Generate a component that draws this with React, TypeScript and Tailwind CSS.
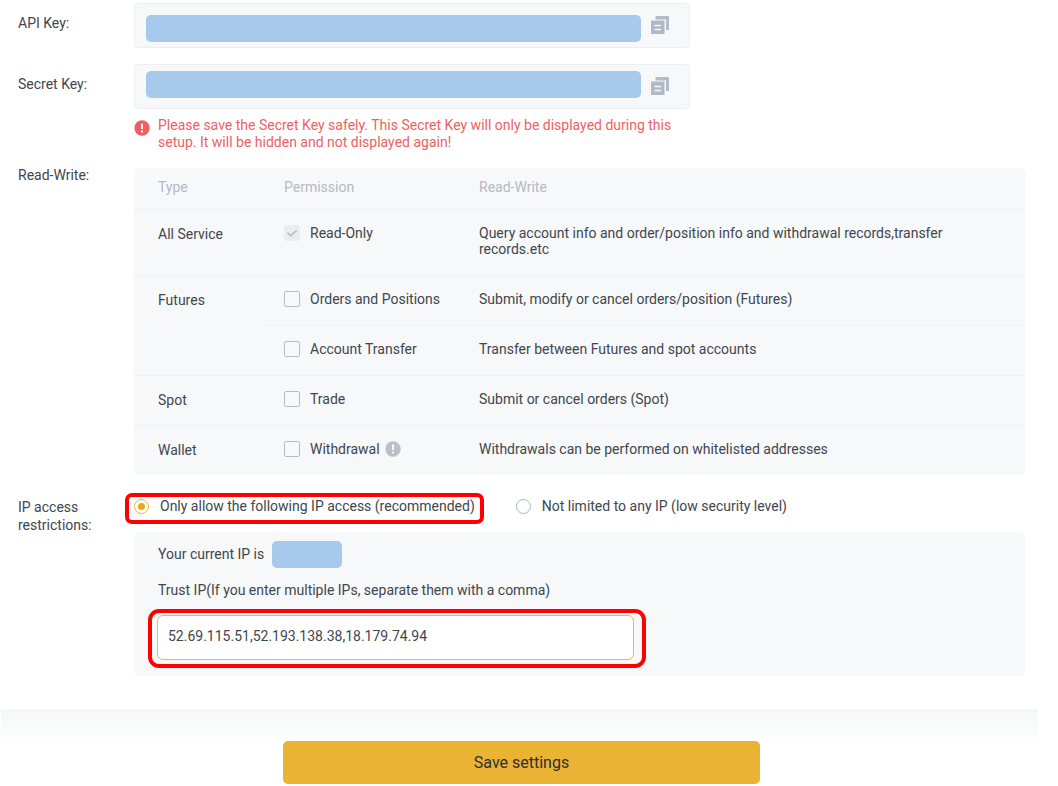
import { useState, type ReactNode } from 'react';
import clsx from 'clsx';

interface Permission {
  id: string;
  type?: string;
  typeRows?: number;
  label: string;
  description: string;
  locked?: boolean;
  hint?: boolean;
}

const permissions: Permission[] = [
  {
    id: 'read-only',
    type: 'All Service',
    label: 'Read-Only',
    description: 'Query account info and order/position info and withdrawal records,transfer records.etc',
    locked: true,
  },
  {
    id: 'futures-orders',
    type: 'Futures',
    typeRows: 2,
    label: 'Orders and Positions',
    description: 'Submit, modify or cancel orders/position (Futures)',
  },
  {
    id: 'futures-transfer',
    label: 'Account Transfer',
    description: 'Transfer between Futures and spot accounts',
  },
  { id: 'spot-trade', type: 'Spot', label: 'Trade', description: 'Submit or cancel orders (Spot)' },
  {
    id: 'wallet-withdrawal',
    type: 'Wallet',
    label: 'Withdrawal',
    description: 'Withdrawals can be performed on whitelisted addresses',
    hint: true,
  },
];

function CopyIcon() {
  return (
    <svg viewBox="0 0 18 18" className="h-[18px] w-[18px]" fill="none" aria-hidden="true">
      <path d="M5 0h12.5a.5.5 0 0 1 .5.5V14h-3V3.5H4.5v-3A.5.5 0 0 1 5 0z" fill="#b4bcc8" />
      <rect x="0" y="4.5" width="13.5" height="13.5" rx="0.6" fill="#b0b9c5" />
      <path d="M3.5 9.5h6.5M3.5 13.5h6.5" stroke="#f7f8fa" strokeWidth="1.3" />
    </svg>
  );
}

function AlertIcon({ className }: { className?: string }) {
  return (
    <svg viewBox="0 0 16 16" className={clsx('h-4 w-4 shrink-0', className)} aria-hidden="true">
      <circle cx="8" cy="8" r="7.7" fill="currentColor" />
      <path d="M8 3.5v5.6M8 10.6v1.9" stroke="#fff" strokeWidth="1.8" />
    </svg>
  );
}

function Row({ label, htmlFor, className, children }: {
  label: string;
  htmlFor?: string;
  className?: string;
  children: ReactNode;
}) {
  return (
    <div className="flex">
      <div className={clsx('w-[116px] shrink-0 pr-4 leading-[18px]', className)}>
        {htmlFor ? <label htmlFor={htmlFor}>{label}</label> : label}
      </div>
      <div className="min-w-0 flex-1">{children}</div>
    </div>
  );
}

function KeyField({ id, label, maskClass }: { id: string; label: string; maskClass: string }) {
  return (
    <div className="flex h-[45px] max-w-[556px] items-center gap-[10px] rounded-[4px] border border-[#eceef0] bg-[#f7f8fa] pr-5 pl-[11px]">
      <input
        id={id}
        readOnly
        className={clsx('h-[27px] min-w-0 flex-1 rounded-[5px] bg-[#a6c9ec] px-2 outline-none', maskClass)}
      />
      <button type="button" aria-label={`Copy ${label}`} className="cursor-pointer pb-[2px]">
        <CopyIcon />
      </button>
    </div>
  );
}

function PermissionCheckbox({ item }: { item: Permission }) {
  return (
    <div className="flex items-center">
      <label className="flex items-center gap-[10px]">
        <span className="grid h-4 w-4 shrink-0 place-items-center">
          <input
            type="checkbox"
            defaultChecked={item.locked}
            disabled={item.locked}
            className="peer col-start-1 row-start-1 h-4 w-4 appearance-none rounded-[2px] border border-[#b4bdc8] checked:bg-[#f0b90b] disabled:rounded-[3px] disabled:border-0 disabled:bg-[#ebecee]"
          />
          <svg viewBox="0 0 16 16" className="pointer-events-none col-start-1 row-start-1 hidden h-4 w-4 peer-checked:block" fill="none">
            <path d="M3.5 7.5l3.3 3.3 6-5.5" stroke="#b3bac5" strokeWidth="1.5" />
          </svg>
        </span>
        {item.label}
      </label>
      {item.hint && <AlertIcon className="ml-[5px] text-[#b9c0c8]" />}
    </div>
  );
}

function IpRadio({ label, checked, onChange }: { label: string; checked: boolean; onChange: () => void }) {
  return (
    <label className="flex items-start gap-[11px] leading-4">
      <span className="mt-px grid h-[15px] w-[15px] shrink-0 place-items-center">
        <input
          type="radio"
          name="ip-access"
          checked={checked}
          onChange={onChange}
          className="peer col-start-1 row-start-1 h-[15px] w-[15px] appearance-none rounded-full border border-[#a9b2c4] checked:border-[#eab333]"
        />
        <span className="pointer-events-none col-start-1 row-start-1 hidden h-[7px] w-[7px] rounded-full bg-[#e8a817] peer-checked:block" />
      </span>
      {label}
    </label>
  );
}

export default function App() {
  const [limited, setLimited] = useState(true);
  const [trustIps, setTrustIps] = useState('52.69.115.51,52.193.138.38,18.179.74.94');

  return (
    <form
      className="bg-white font-['Roboto',sans-serif] text-[14px] text-[#40464d]"
      onSubmit={(e) => e.preventDefault()}
    >
      <div className="pt-[3px] pr-[33px] pl-[18px]">
        <Row label="API Key:" htmlFor="api-key" className="pt-[11px]">
          <KeyField id="api-key" label="API Key" maskClass="mt-[6px]" />
        </Row>

        <div className="mt-4">
          <Row label="Secret Key:" htmlFor="secret-key" className="pt-[11px]">
            <KeyField id="secret-key" label="Secret Key" maskClass="mb-1" />
            <div className="mt-2 flex max-w-[556px] gap-2 leading-[17px] text-[#ee5f63]">
              <AlertIcon className="mt-[3px]" />
              <p>
                Please save the Secret Key safely. This Secret Key will only be displayed during this setup. It will
                be hidden and not displayed again!
              </p>
            </div>
          </Row>
        </div>

        {/* Permissions */}
        <div className="mt-[15px]">
          <Row label="Read-Write:">
            <div className="mt-[2px] rounded-[5px] bg-[#f7f8fa]">
              <table className="w-full table-fixed border-separate border-spacing-0 text-left">
                <colgroup>
                  <col className="w-[129px]" />
                  <col className="w-[216px]" />
                  <col />
                </colgroup>
                <thead>
                  <tr className="leading-[17px] text-[#b3bac2]">
                    <th className="pt-[11px] pb-[13px] pl-6 font-normal">Type</th>
                    <th className="pt-[11px] pb-[13px] pl-[21px] font-normal">Permission</th>
                    <th className="pt-[11px] pr-16 pb-[13px] font-normal">Read-Write</th>
                  </tr>
                </thead>
                <tbody>
                  {permissions.map((item) => (
                    <tr key={item.id} className="align-top leading-4">
                      {item.type && (
                        <td rowSpan={item.typeRows} className="border-t border-[#f1f2f4] pt-4 pb-[17px] pl-6">
                          {item.type}
                        </td>
                      )}
                      <td className="border-t border-[#f1f2f4] pt-[15px] pb-[18px] pl-[21px]">
                        <PermissionCheckbox item={item} />
                      </td>
                      <td className="border-t border-[#f1f2f4] pt-[15px] pr-16 pb-[18px]">{item.description}</td>
                    </tr>
                  ))}
                </tbody>
              </table>
            </div>
          </Row>
        </div>

        {/* IP restrictions */}
        <div className="mt-[18px]">
          <Row label="IP access restrictions:" className="pt-[5px]">
            <div className="flex gap-8">
              <div className="-ml-[9px] h-[31px] rounded-[7px] border-4 border-[#fe0000] px-[5px] pt-px">
                <IpRadio
                  label="Only allow the following IP access (recommended)"
                  checked={limited}
                  onChange={() => setLimited(true)}
                />
              </div>
              <div className="pt-[5px]">
                <IpRadio
                  label="Not limited to any IP (low security level)"
                  checked={!limited}
                  onChange={() => setLimited(false)}
                />
              </div>
            </div>

            <div className="mt-2 rounded-[5px] bg-[#f7f8fa] pt-[9px] pr-6 pb-2 pl-6">
              <p className="flex items-center gap-2">
                Your current IP is
                <span className="h-[27px] w-[70px] rounded-[5px] bg-[#a6c9ec]" />
              </p>
              <label htmlFor="trust-ip" className="mt-[13px] block leading-[18px]">
                Trust IP(If you enter multiple IPs, separate them with a comma)
              </label>
              <div className="mt-[10px] -ml-[10px] max-w-[498px] rounded-[11px] border-4 border-[#fe0000] pt-[2px] pr-2 pb-1 pl-[5px]">
                <input
                  id="trust-ip"
                  value={trustIps}
                  onChange={(e) => setTrustIps(e.target.value)}
                  className="block h-[45px] w-full rounded-[6px] border border-[#eab94b] bg-white px-[10px] pb-1 outline-none"
                />
              </div>
            </div>
          </Row>
        </div>
      </div>

      <div className="mt-[33px] mr-5 ml-px bg-linear-to-b from-[#f5f7f7] to-white to-[35px] pt-8 pb-[2px] pl-1">
        <button
          type="submit"
          className="mx-auto block h-[43px] w-[477px] max-w-full cursor-pointer rounded-[5px] bg-[#eab333] text-[16px] text-[#2b2f36]"
        >
          Save settings
        </button>
      </div>
    </form>
  );
}
